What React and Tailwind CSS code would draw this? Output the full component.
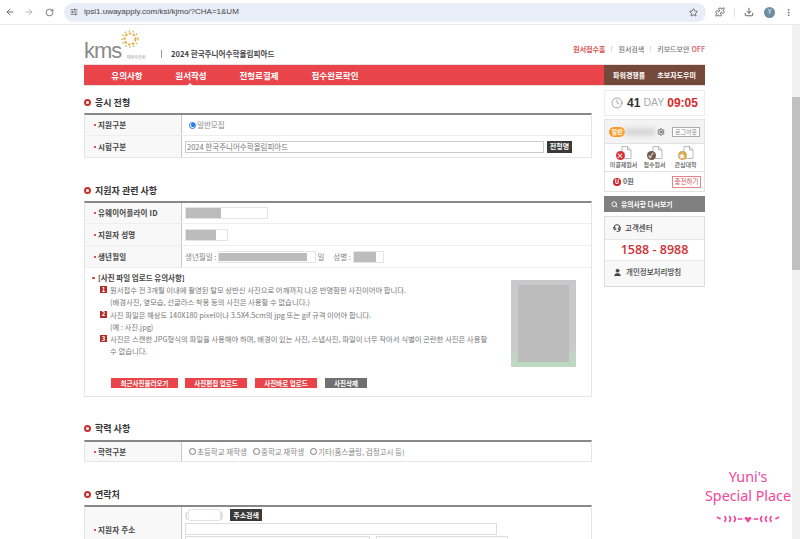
import { ArrowLeft, ArrowRight, RotateCw, SlidersHorizontal, Star, Puzzle, Download, EllipsisVertical, Settings, Search, User, Headset, Clock } from 'lucide-react';

function SectionTitle({ children, className = '' }) {
  return (
    <div className={`flex h-[12px] items-center gap-[4px] ${className}`}>
      <span className="h-[7px] w-[7px] rounded-full border-2 border-[#c9302c] bg-white" />
      <h2 className="text-[9px] font-bold leading-none text-[#333]">{children}</h2>
    </div>
  );
}

function Row({ label, children, height = 'h-[22px]', last = false }) {
  return (
    <div className={`flex ${height} ${last ? '' : 'border-b border-[#eeeeee]'}`}>
      <div className="flex w-[97px] shrink-0 items-center gap-[2px] border-r border-[#c8c8c8] bg-[#f8f8f8] pl-[9px] text-[7.5px] font-bold tracking-[0.2px] text-[#444]">
        <span className="h-[2px] w-[2px] bg-[#d9534f]" />
        {label}
      </div>
      <div className="flex min-w-0 flex-1 items-center pl-[3px] text-[7.5px] text-[#888]">{children}</div>
    </div>
  );
}

function Table({ children }) {
  return <div className="border border-t-2 border-[#e6e6e6] border-t-[#888888] bg-white">{children}</div>;
}

function Masked({ outer, inner }) {
  return (
    <div className={`h-[12px] border border-[#e4e4e4] bg-white ${outer}`}>
      <div className={`h-full bg-[#bcbcbc] ${inner}`} />
    </div>
  );
}

function Note({ n, lines }) {
  return (
    <div className="flex gap-[3px]">
      <span className="mt-[2px] flex h-[7px] w-[7px] shrink-0 items-center justify-center bg-[#b52a25] text-[6px] font-bold leading-none text-white">{n}</span>
      <div>
        {lines.map((line) => (
          <p key={line} className="h-[12.3px] whitespace-nowrap text-[7.35px] leading-[12.3px] text-[#777]">{line}</p>
        ))}
      </div>
    </div>
  );
}

function PhotoButton({ className, children }) {
  return (
    <button className={`flex h-[10px] items-center justify-center text-[6.5px] font-bold leading-none text-white ${className}`}>{children}</button>
  );
}

function DocIcon({ color, mark }) {
  return (
    <div className="relative h-[14px] w-[18px]">
      <svg viewBox="0 0 18 14" className="absolute inset-0 h-full w-full" fill="none" stroke="#aaaaaa" strokeWidth="0.8">
        <path d="M7 0.5h5.5l3.5 3.5v8.5H7z" />
        <path d="M12.5 0.5v3.5h3.5" />
      </svg>
      <span className="absolute bottom-0 left-[1px] flex h-[9px] w-[9px] items-center justify-center rounded-full text-[7px] font-bold leading-none text-white" style={{ backgroundColor: color }}>{mark}</span>
    </div>
  );
}

function Sidebar() {
  return (
    <aside className="w-[101px] shrink-0 pt-[4px] font-['Noto_Sans_CJK_KR',sans-serif]">
      <div className="flex h-[26px] items-center justify-center gap-[3px] border border-[#ececec] bg-white">
        <Clock size={12} strokeWidth={1} className="text-[#555]" />
        <span className="ml-[1px] font-['Liberation_Sans',sans-serif] text-[12px] font-bold text-[#333]">41</span>
        <span className="font-['Liberation_Sans',sans-serif] text-[10.5px] text-[#aaa]">DAY</span>
        <span className="font-['Liberation_Sans',sans-serif] text-[12px] font-bold text-[#d92b2b]">09:05</span>
      </div>

      <div className="mt-[3px] border border-[#e2e2e2] bg-white">
        <div className="flex h-[23px] items-center justify-between bg-[#f3f3f3] px-[4px]">
          <div className="flex items-center">
            <span className="flex h-[10px] w-[16px] items-center justify-center rounded-full bg-[#f99a25] text-[6px] font-bold leading-none text-white">일반</span>
            <span className="h-[8px] w-[30px] bg-[#d8d8d8] blur-[2px]" />
            <Settings size={8} strokeWidth={3} className="ml-[2px] text-[#666]" />
          </div>
          <span className="flex h-[10px] w-[28px] items-center justify-center border border-[#aaa] bg-white text-[6px] leading-none text-[#888]">로그아웃</span>
        </div>
        <div className="flex h-[29px] items-center justify-between border-y border-[#e2e2e2] px-[3px]">
          {[
            ['미결제원서', '#d7343a', '×'],
            ['접수원서', '#6f5a4d', '✓'],
            ['관심대학', '#d5a84f', '★'],
          ].map(([label, color, mark]) => (
            <div key={label} className="flex w-[31px] flex-col items-center">
              <DocIcon color={color} mark={mark} />
              <span className="mt-[1px] whitespace-nowrap text-[6px] font-medium leading-[8px] text-[#555]">{label}</span>
            </div>
          ))}
        </div>
        <div className="flex h-[19px] items-center justify-between pl-[8px] pr-[3px]">
          <div className="flex items-center gap-[2px]">
            <span className="flex h-[8px] w-[8px] items-center justify-center rounded-full bg-[#c7232b] text-[6px] font-bold leading-none text-white">U</span>
            <span className="text-[7px] font-bold text-[#666]">0원</span>
          </div>
          <span className="flex h-[12px] w-[29px] items-center justify-center border border-[#e8838a] text-[6.5px] leading-none text-[#d9535a]">충전하기</span>
        </div>
      </div>

      <div className="mt-[4px] flex h-[16px] items-center gap-[3px] bg-[#808080] pl-[7px] text-[6.8px] font-bold text-white">
        <Search size={7} strokeWidth={3} />
        유의사항 다시보기
      </div>

      <div className="mt-[4px] border border-[#dcdcdc]">
        <div className="flex h-[22px] items-center gap-[4px] bg-[#f8f8f8] pl-[8px] text-[7.5px] font-medium text-[#444]">
          <Headset size={8} strokeWidth={3} className="text-[#444]" />
          고객센터
        </div>
        <div className="flex h-[22px] items-center justify-center border-y border-[#e6e6e6] bg-white font-['Open_Sans',sans-serif] text-[12.5px] font-semibold text-[#cf3339]">1588 - 8988</div>
        <div className="flex h-[25px] items-center gap-[4px] bg-[#f8f8f8] pb-[3px] pl-[8px] text-[7.5px] font-medium text-[#444]">
          <User size={9} fill="#444" className="text-[#444]" />
          개인정보처리방침
        </div>
      </div>
    </aside>
  );
}

export default function App() {
  return (
    <div className="relative flex h-[539px] w-[800px] flex-col overflow-hidden bg-white font-['Noto_Sans_CJK_KR',sans-serif]">
      {/* browser bar */}
      <div className="flex h-[25px] shrink-0 items-center border-b border-[#e8e8e8] bg-white pl-[4px]">
        <ArrowLeft size={10} className="ml-[1px] text-[#555]" />
        <ArrowRight size={10} className="ml-[9px] text-[#aaa]" />
        <RotateCw size={9} className="ml-[11px] text-[#555]" />
        <div className="ml-[10px] flex h-[19px] w-[642px] items-center rounded-full bg-[#e9edf7] pl-[6px] pr-[8px]">
          <SlidersHorizontal size={8} className="text-[#444]" />
          <span className="ml-[6px] font-['Liberation_Sans',sans-serif] text-[8px] text-[#444]">ipsi1.uwayapply.com/ksi/kjmo/?CHA=1&amp;UM</span>
          <Star size={9} className="ml-auto text-[#444]" />
        </div>
        <Puzzle size={10} className="ml-[9px] text-[#444]" />
        <span className="ml-[9px] h-[9px] w-px bg-[#dbe3f3]" />
        <Download size={10} className="ml-[9px] text-[#444]" />
        <span className="ml-[10px] flex h-[11px] w-[11px] items-center justify-center rounded-full bg-[#6f8ea3] text-[6px] leading-none text-white">Y</span>
        <EllipsisVertical size={9} className="ml-[9px] text-[#555]" />
      </div>

      <div className="flex min-h-0 flex-1">
        <div className="min-w-0 flex-1 overflow-hidden pl-[84px]">
          <div className="w-[621px]">
            {/* logo row */}
            <header className="flex h-[39px] items-end pb-[4px]">
              <div className="relative h-[31px] w-[65px]">
                <span className="absolute bottom-[-2px] left-0 font-['Liberation_Sans',sans-serif] text-[22px] leading-[22px] tracking-[-1px] text-[#8a8a8a]">kms</span>
                <svg viewBox="0 0 18 18" className="absolute left-[37px] top-[1px] h-[18px] w-[18px]" fill="none" strokeWidth="2">
                  <circle cx="9" cy="9" r="5.5" stroke="#f5a640" strokeDasharray="2.5 1.5" />
                  <circle cx="9" cy="9" r="8" stroke="#a9c86a" strokeWidth="1.5" strokeDasharray="1.5 2.5" />
                </svg>
                <span className="absolute bottom-[1px] left-[43px] whitespace-nowrap text-[4px] leading-none text-[#888]">대한수학회</span>
              </div>
              <span className="mb-[2px] ml-[12px] h-[8px] w-px bg-[#999]" />
              <span className="mb-[1px] ml-[9px] text-[7.6px] font-bold leading-[10px] text-[#444]">2024 한국주니어수학올림피아드</span>
              <div className="mb-[6px] ml-auto flex items-center text-[7px] font-medium leading-[10px] text-[#777]">
                <span className="font-bold text-[#d9534f]">원서접수홈</span>
                <span className="mx-[6px] h-[6px] w-px bg-[#ddd]" />
                <span>원서검색</span>
                <span className="mx-[6px] h-[6px] w-px bg-[#ddd]" />
                <span>키보드보안</span>
                <span className="ml-[2px] font-bold text-[#e0737a]">OFF</span>
              </div>
            </header>

            {/* nav */}
            <nav className="relative flex h-[22px] border-y border-[#e8e0e0] bg-[#e8444a]">
              <div className="flex flex-1 items-center pl-[11px] text-[8.5px] font-bold text-white">
                <span className="w-[64px] text-center">유의사항</span>
                <span className="w-[64px] text-center">원서작성</span>
                <span className="w-[72px] text-center">전형료결제</span>
                <span className="w-[80px] text-center">접수완료확인</span>
              </div>
              <div className="flex w-[101px] items-center justify-between bg-[#74493a] px-[9px] text-[7px] font-bold text-white">
                <span>파워경쟁률</span>
                <span>초보자도우미</span>
              </div>
              <span className="absolute bottom-[-1px] left-[103px] h-0 w-0 border-x-[3px] border-b-[3px] border-x-transparent border-b-white" />
            </nav>

            <div className="flex gap-[12px]">
              <main className="w-[508px] shrink-0">
                <SectionTitle className="mt-[10px]">응시 전형</SectionTitle>
                <div className="mt-[5px]">
                  <Table>
                    <Row label="지원구분" height="h-[21px]">
                      <span className="ml-[4px] flex items-center gap-[1px]">
                        <span className="flex h-[7px] w-[7px] items-center justify-center rounded-full border border-[#1a73e8] bg-white">
                          <span className="h-[4px] w-[4px] rounded-full bg-[#1a73e8]" />
                        </span>
                        일반모집
                      </span>
                    </Row>
                    <Row label="시험구분" height="h-[21px]" last>
                      <div className="flex h-[12px] w-[359px] items-center border border-[#cccccc] pl-[1px] text-[7.5px] text-[#777]">2024 한국주니어수학올림피아드</div>
                      <span className="ml-[3px] flex h-[12px] w-[25px] items-center justify-center bg-[#3a3a3a] text-[7px] font-bold leading-none text-white">전형명</span>
                    </Row>
                  </Table>
                </div>

                <SectionTitle className="mt-[26px]">지원자 관련 사항</SectionTitle>
                <div className="mt-[5px]">
                  <Table>
                    <Row label="유웨이어플라이 ID" height="h-[21px]">
                      <Masked outer="w-[83px]" inner="w-[35px]" />
                    </Row>
                    <Row label="지원자 성명">
                      <Masked outer="w-[43px]" inner="w-[30px]" />
                    </Row>
                    <Row label="생년월일">
                      <span>생년월일 :</span>
                      <div className="ml-[2px] flex h-[12px] w-[98px] items-center border border-[#e4e4e4] bg-white">
                        <div className="h-[8px] w-[88px] bg-[#bcbcbc]" />
                      </div>
                      <span className="ml-[1px]">일</span>
                      <span className="ml-[9px]">성별 :</span>
                      <Masked outer="ml-[2px] w-[31px]" inner="w-[22px]" />
                    </Row>
                    <div className="flex h-[128px] justify-between pl-[7px] pr-[15px]">
                      <div>
                        <div className="mt-[4px] flex items-center gap-[3px] text-[7.5px] font-bold leading-[12px] text-[#444]">
                          <span className="h-[2px] w-[3px] bg-[#d9534f]" />
                          [사진 파일 업로드 유의사항]
                        </div>
                        <div className="ml-[8px]">
                          <Note n="1" lines={['원서접수 전 3개월 이내에 촬영된 탈모 상반신 사진으로 어깨까지 나온 반명함판 사진이어야 합니다.', '(배경사진, 옆모습, 선글라스 착용 등의 사진은 사용할 수 없습니다.)']} />
                          <Note n="2" lines={['사진 파일은 해상도 140X180 pixel이나 3.5X4.5cm의 jpg 또는 gif 규격 이어야 합니다.', '(예 : 사진.jpg)']} />
                          <Note n="3" lines={['사진은 스캔한 JPG형식의 파일을 사용해야 하며, 배경이 있는 사진, 스냅사진, 파일이 너무 작아서 식별이 곤란한 사진은 사용할', '수 없습니다.']} />
                        </div>
                        <div className="ml-[19px] mt-[20px] flex gap-[7px]">
                          <PhotoButton className="w-[67px] bg-[#e8444a]">최근사진불러오기</PhotoButton>
                          <PhotoButton className="w-[62px] bg-[#e8444a]">사진편집 업로드</PhotoButton>
                          <PhotoButton className="ml-[1px] w-[62px] bg-[#e8444a]">사진바로 업로드</PhotoButton>
                          <PhotoButton className="ml-[1px] w-[42px] bg-[#707070]">사진삭제</PhotoButton>
                        </div>
                      </div>
                      <div className="mt-[12px] h-[87px] w-[65px] bg-[linear-gradient(#c9c9cc_75%,#bcdcc0)] px-[7px] pt-[5px]">
                        <div className="h-[77px] bg-[#bcbcbc]" />
                      </div>
                    </div>
                  </Table>
                </div>

                <SectionTitle className="mt-[25px]">학력 사항</SectionTitle>
                <div className="mt-[6px]">
                  <Table>
                    <Row label="학력구분" height="h-[19px]" last>
                      {['초등학교 재학생', '중학교 재학생', '기타(홈스쿨링, 검정고시 등)'].map((item) => (
                        <span key={item} className="ml-[4px] mr-[2px] flex items-center gap-[1px] whitespace-nowrap">
                          <span className="h-[7px] w-[7px] rounded-full border border-[#777] bg-white" />
                          {item}
                        </span>
                      ))}
                    </Row>
                  </Table>
                </div>

                <SectionTitle className="mt-[26px]">연락처</SectionTitle>
                <div className="mt-[5px]">
                  <Table>
                    <Row label="지원자 주소" height="h-[46px]" last>
                      <div className="mt-[2px] self-start">
                        <div className="flex items-center">
                          <span className="text-[#999]">(</span>
                          <span className="h-[12px] w-[33px] rounded-[2px] border border-[#e4e4e4]" />
                          <span className="text-[#999]">)</span>
                          <span className="ml-[7px] flex h-[12px] w-[32px] items-center justify-center bg-[#3a3a3a] text-[7px] font-bold leading-none text-white">주소검색</span>
                        </div>
                        <div className="mt-[2px] h-[12px] w-[312px] border border-[#dddddd]" />
                        <div className="mt-[1px] flex gap-[6px]">
                          <div className="h-[12px] w-[185px] border border-[#dddddd]" />
                          <div className="h-[12px] w-[132px] border border-[#dddddd]" />
                        </div>
                      </div>
                    </Row>
                  </Table>
                </div>
              </main>
              <Sidebar />
            </div>
          </div>
        </div>

        {/* scrollbar */}
        <div className="flex w-[8px] shrink-0 flex-col bg-[#f1f1f1]">
          <div className="h-[72px]" />
          <div className="h-[173px] bg-[#c1c1c1]" />
        </div>
      </div>

      {/* watermark over the page */}
      <div className="absolute bottom-[15px] right-[9px] w-[86px] text-center font-['Noto_Sans',sans-serif] text-[14.3px] leading-[19px] text-[#f0479c]">
        <p>Yuni's</p>
        <p className="whitespace-nowrap">Special Place</p>
        <svg viewBox="0 0 70 10" className="mx-auto mt-[9px] h-[10px] w-[66px]" fill="none" stroke="#f0479c" strokeWidth="1.8">
          <path d="M2 3l4 2M10 2q3 3 0 6M15 2q3 3 0 6M20 2q3 3 0 6M24 5h5M41 5h5M50 2q-3 3 0 6M55 2q-3 3 0 6M60 2q-3 3 0 6M68 3l-4 2" />
          <path d="M35 9l-4-5q2-2.500 4 0q2-2.500 4 0z" fill="#f0479c" stroke="none" />
        </svg>
      </div>
    </div>
  );
}
